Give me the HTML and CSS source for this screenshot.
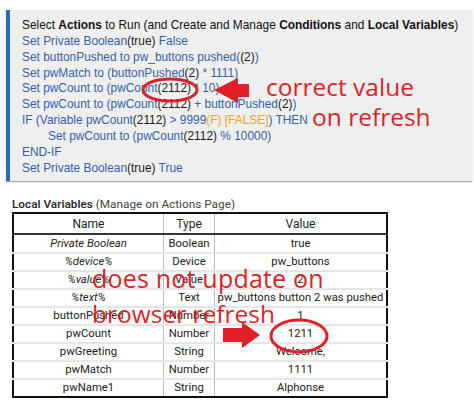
FILE: index.html
```html
<!DOCTYPE html>
<html>
<head>
<meta charset="utf-8">
<link rel="stylesheet" href="styles.css">
</head>
<body>
<div class="page">
  <div class="actions">
    <div class="line title">Select <b>Actions</b> to Run (and Create and Manage <b>Conditions</b> and <b>Local Variables</b>)</div>
    <div class="line">Set Private Boolean<span class="k">(true)</span> False</div>
    <div class="line">Set buttonPushed to pw_buttons pushed(<span class="k">(2)</span>)</div>
    <div class="line">Set pwMatch to (buttonPushed<span class="k">(2)</span> * 1111)</div>
    <div class="line">Set pwCount to (pwCount<span class="k">(2112)</span> * 10)</div>
    <div class="line">Set pwCount to (pwCount<span class="k">(2112)</span> + buttonPushed<span class="k">(2)</span>)</div>
    <div class="line">IF (Variable pwCount<span class="k">(2112)</span> &gt; 9999<span class="o">(F) [FALSE]</span>) THEN</div>
    <div class="line indent">Set pwCount to (pwCount<span class="k">(2112)</span> % 10000)</div>
    <div class="line">END-IF</div>
    <div class="line">Set Private Boolean<span class="k">(true)</span> True</div>
  </div>

  <div class="locals">
    <div class="heading"><span class="hstrong">Local Variables</span> (Manage on Actions Page)</div>
    <table class="vars">
      <thead>
        <tr><th class="c-name">Name</th><th class="c-type">Type</th><th class="c-val">Value</th></tr>
      </thead>
      <tbody>
        <tr><td class="it">Private Boolean</td><td>Boolean</td><td>true</td></tr>
        <tr><td class="it">%device%</td><td>Device</td><td>pw_buttons</td></tr>
        <tr><td class="it">%value%</td><td>Value</td><td>2</td></tr>
        <tr><td class="it">%text%</td><td>Text</td><td>pw_buttons button 2 was pushed</td></tr>
        <tr><td>buttonPushed</td><td>Number</td><td>1</td></tr>
        <tr><td>pwCount</td><td>Number</td><td>1211</td></tr>
        <tr><td>pwGreeting</td><td>String</td><td>Welcome,</td></tr>
        <tr><td>pwMatch</td><td>Number</td><td>1111</td></tr>
        <tr><td>pwName1</td><td>String</td><td>Alphonse</td></tr>
      </tbody>
    </table>
  </div>

  <svg class="marks" width="474" height="407" viewBox="0 0 474 407">
    <ellipse cx="170" cy="90" rx="27" ry="11" fill="none" stroke="#e01f26" stroke-width="3"/>
    <polygon points="214,90 238,78 238,84 249,84 249,97 238,97 238,103" fill="#e01f26"/>
    <ellipse cx="299" cy="336" rx="28" ry="16" fill="none" stroke="#e01f26" stroke-width="3"/>
    <polygon points="260,335 242,322 242,328 223,328 223,342 242,342 242,348" fill="#e01f26"/>
  </svg>
  <div class="note n1">correct value</div>
  <div class="note n2">on refresh</div>
  <div class="note n3">does not update on</div>
  <div class="note n4">browser refresh</div>
</div>
</body>
</html>
```
FILE: styles.css
```css
html, body {
  margin: 0;
  padding: 0;
  background: #fff;
}
.page {
  position: relative;
  width: 474px;
  height: 407px;
  overflow: hidden;
}
.actions {
  margin: 10px 2px 0 6px;
  background: #efefef;
  border-left: 4px solid #2d6cb8;
  padding: 8px 0 5px 12px;
  box-shadow: 0 1px 1px #a8a8a8;
  font-family: "Liberation Sans", Arial, sans-serif;
  font-size: 11.9px;
  color: #3560ad;
}
.line {
  height: 15.85px;
  line-height: 15.85px;
  white-space: nowrap;
}
.line.title {
  color: #111;
}
.line.title b {
  font-weight: bold;
}
.indent {
  padding-left: 26px;
}
.k {
  color: #1a1a1a;
}
.o {
  color: #f0a229;
}
.locals {
  margin: 16px 0 0 12px;
  font-family: Roboto, "Liberation Sans", sans-serif;
  color: #222;
}
.heading {
  font-size: 11.8px;
  line-height: 15px;
  color: #444;
}
.hstrong {
  color: #222;
  font-weight: 500;
}
.vars {
  border-collapse: collapse;
  border: 2px solid #111;
  width: 376px;
  font-size: 11.3px;
  table-layout: fixed;
}
.vars th {
  font-weight: normal;
  height: 19px;
  padding: 0;
  border-bottom: 2px solid #333;
  border-left: 1px solid #bbb;
  text-align: center;
  font-size: 12px;
}
.vars td {
  height: 16px;
  padding: 0;
  border-top: 2px solid #e6e6e6;
  border-left: 1px solid #bbb;
  text-align: center;
  white-space: nowrap;
  line-height: 16px;
}
.vars tbody tr:first-child td {
  border-top: none;
  height: 17px;
}
.c-name { width: 149px; }
.c-type { width: 50px; }
.it { font-style: italic; }
.marks {
  position: absolute;
  left: 0;
  top: 0;
  pointer-events: none;
}
.note {
  position: absolute;
  font-family: "Open Sans", "Noto Sans", sans-serif;
  font-size: 24.5px;
  line-height: 28px;
  color: #e01f26;
  white-space: nowrap;
}
.n1 { left: 266px; top: 73px; }
.n2 { left: 312px; top: 103px; }
.n3 { left: 92px; top: 264px; font-size: 25px; letter-spacing: 0.2px; }
.n4 { left: 92px; top: 300px; }
```
